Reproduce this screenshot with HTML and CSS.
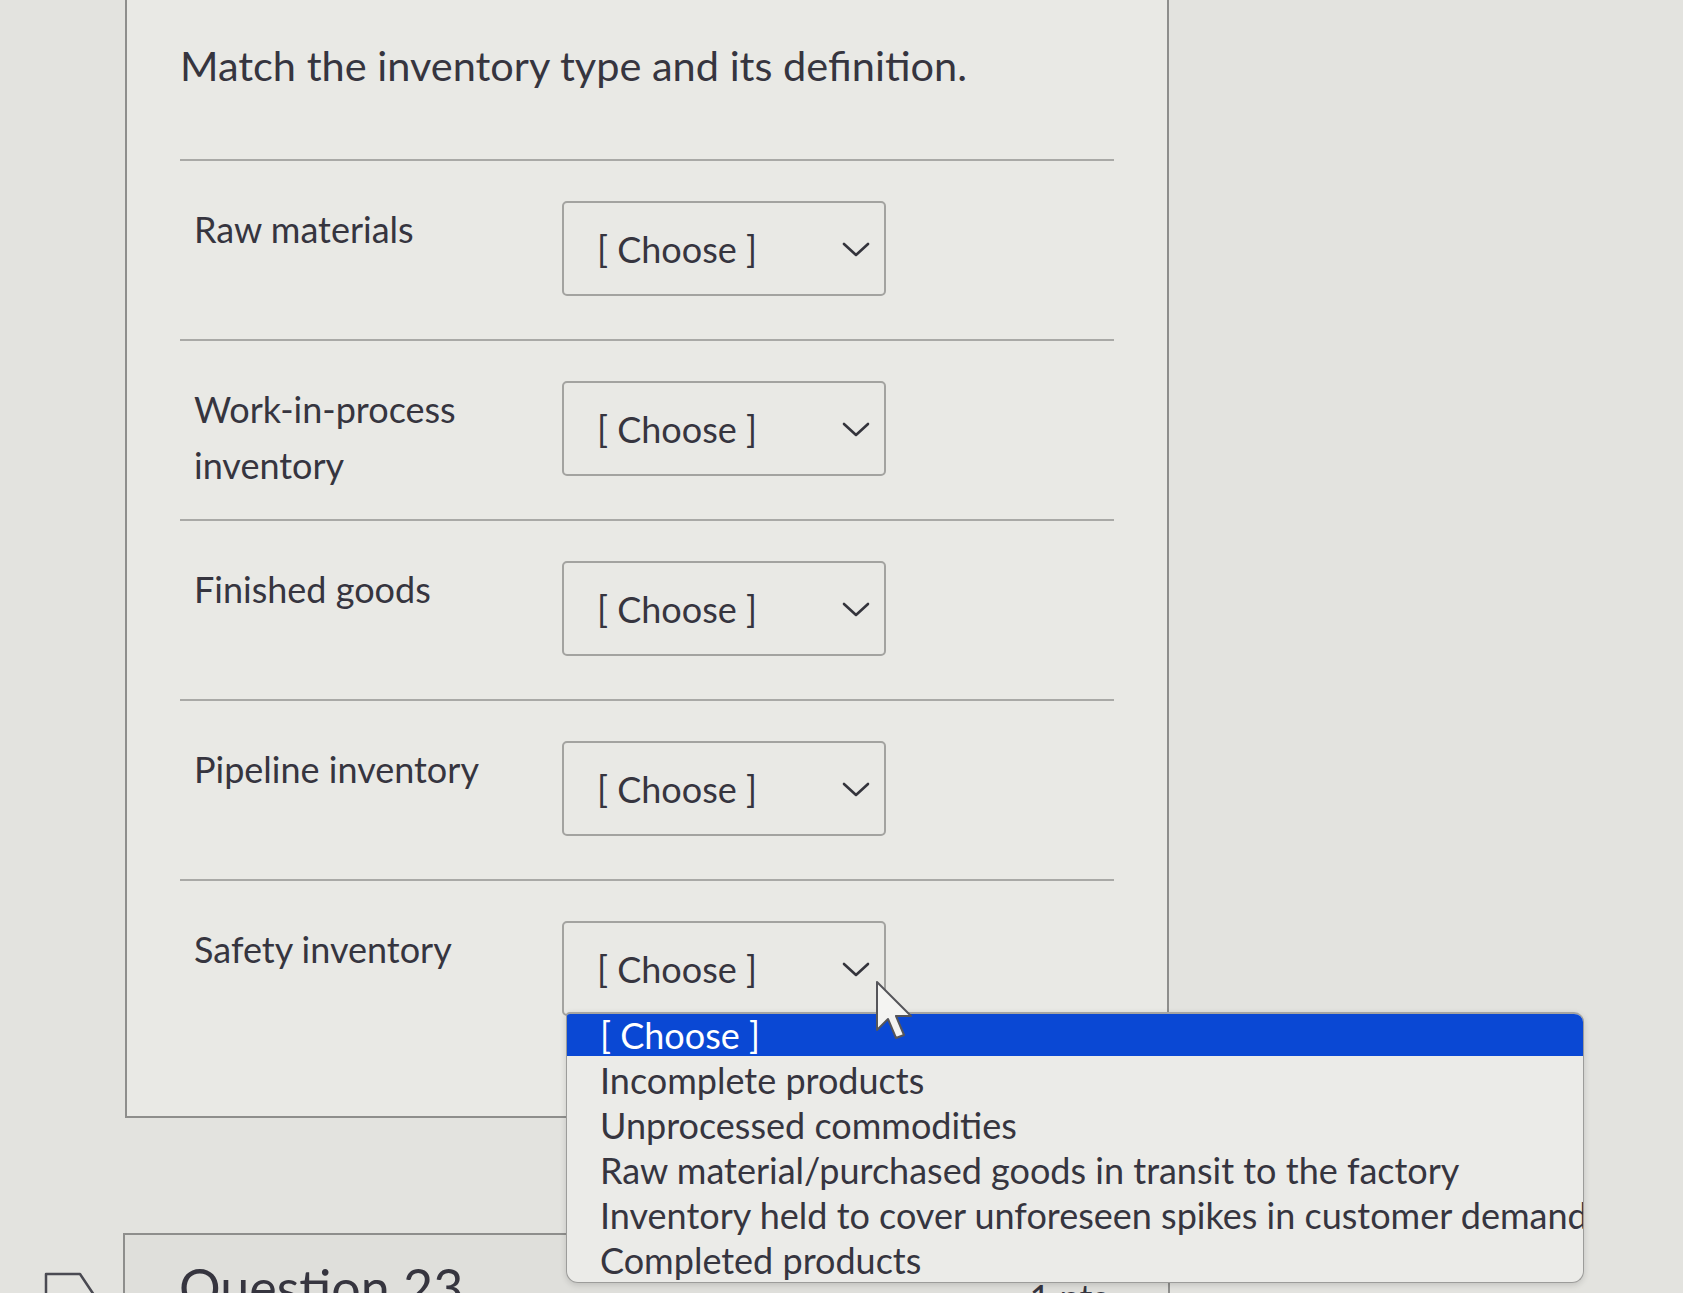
FILE: index.html
```html
<!DOCTYPE html>
<html>
<head>
    <title>Quiz - Question 22</title>
    <link rel="stylesheet" href="styles.css">
</head>
<body>
    <div class="quiz-card">
        <h2 class="prompt">Match the inventory type and its definition.</h2>

        <div class="match-row">
            <div class="term">Raw materials</div>
            <div class="select-wrap">
                <div class="select">
                    <span>[ Choose ]</span>
                    <svg class="chevron" width="28" height="16" viewBox="0 0 28 16"><path d="M2 2 L14 13 L26 2" fill="none" stroke="#34343c" stroke-width="2.6" stroke-linecap="round" stroke-linejoin="round"/></svg>
                </div>
            </div>
        </div>

        <div class="match-row">
            <div class="term">Work-in-process inventory</div>
            <div class="select-wrap">
                <div class="select">
                    <span>[ Choose ]</span>
                    <svg class="chevron" width="28" height="16" viewBox="0 0 28 16"><path d="M2 2 L14 13 L26 2" fill="none" stroke="#34343c" stroke-width="2.6" stroke-linecap="round" stroke-linejoin="round"/></svg>
                </div>
            </div>
        </div>

        <div class="match-row">
            <div class="term">Finished goods</div>
            <div class="select-wrap">
                <div class="select">
                    <span>[ Choose ]</span>
                    <svg class="chevron" width="28" height="16" viewBox="0 0 28 16"><path d="M2 2 L14 13 L26 2" fill="none" stroke="#34343c" stroke-width="2.6" stroke-linecap="round" stroke-linejoin="round"/></svg>
                </div>
            </div>
        </div>

        <div class="match-row">
            <div class="term">Pipeline inventory</div>
            <div class="select-wrap">
                <div class="select">
                    <span>[ Choose ]</span>
                    <svg class="chevron" width="28" height="16" viewBox="0 0 28 16"><path d="M2 2 L14 13 L26 2" fill="none" stroke="#34343c" stroke-width="2.6" stroke-linecap="round" stroke-linejoin="round"/></svg>
                </div>
            </div>
        </div>

        <div class="match-row">
            <div class="term">Safety inventory</div>
            <div class="select-wrap">
                <div class="select">
                    <span>[ Choose ]</span>
                    <svg class="chevron" width="28" height="16" viewBox="0 0 28 16"><path d="M2 2 L14 13 L26 2" fill="none" stroke="#34343c" stroke-width="2.6" stroke-linecap="round" stroke-linejoin="round"/></svg>
                </div>

                <!-- open option list -->
                <ul class="options">
                    <li class="selected">[ Choose ]</li>
                    <li>Incomplete products</li>
                    <li>Unprocessed commodities</li>
                    <li>Raw material/purchased goods in transit to the factory</li>
                    <li>Inventory held to cover unforeseen spikes in customer demand</li>
                    <li>Completed products</li>
                </ul>

                <svg class="cursor" width="40" height="62" viewBox="0 0 40 62">
                    <path d="M2 2 L2 50 L13 39 L21 58 L29 55 L21 36 L36 36 Z" fill="#f4f4f2" stroke="#55555a" stroke-width="2" stroke-linejoin="round"/>
                </svg>
            </div>
        </div>
    </div>

    <div class="question-row">
        <svg class="flag" width="54" height="52" viewBox="0 0 54 52">
            <path d="M2 2 H36 L52 26 L36 50 H2 Z" fill="none" stroke="#4a4a52" stroke-width="2.5" stroke-linejoin="round"/>
        </svg>
        <div class="question-card">
            <div class="question-name">Question 23</div>
            <div class="question-pts">1 pts</div>
        </div>
    </div>
</body>
</html>
```

FILE: styles.css
```css
body {
    margin: 0;
    background-color: #e3e3df;
    font-family: Lato, "Noto Sans", sans-serif;
    color: #36353f;
    overflow: hidden;
}

.quiz-card {
    width: 934px;
    margin-left: 125px;
    padding: 0 53px 57px;
    background-color: #e9e9e5;
    border: 2px solid #8e8e8c;
    border-top: none;
}

.prompt {
    margin: 0 0 69px;
    padding-top: 40px;
    font-size: 41.5px;
    font-weight: 400;
    line-height: 50px;
}

.match-row {
    display: grid;
    grid-template-columns: 368px 324px;
    grid-template-rows: 95px;
    padding: 40px 14px 43px;
    border-top: 2px solid #a9a9a6;
}

.term {
    font-size: 36px;
    line-height: 56px;
    padding-right: 20px;
}

.select-wrap {
    position: relative;
}

.select {
    box-sizing: border-box;
    height: 95px;
    display: flex;
    align-items: center;
    justify-content: space-between;
    padding: 0 14px 0 33px;
    border: 2px solid #a3a3a0;
    border-radius: 5px;
    font-size: 36px;
}

.chevron {
    display: block;
    margin-top: 2px;
}

.options {
    position: absolute;
    z-index: 2;
    top: calc(100% - 4px);
    left: 4px;
    width: 1018px;
    height: 271px;
    box-sizing: border-box;
    margin: 0;
    padding: 0;
    list-style: none;
    overflow: hidden;
    white-space: nowrap;
    background-color: #ebebe8;
    border: 1px solid #9c9c9a;
    border-top: 2px solid #a5a5a3;
    border-radius: 4px 10px 12px 12px;
    box-shadow: 0 2px 6px rgba(0, 0, 0, 0.15);
    font-size: 36px;
}

.options li {
    height: 45px;
    line-height: 45px;
    padding-left: 33px;
}

.options li.selected {
    height: 42px;
    line-height: 42px;
    margin-bottom: 2px;
    background-color: #0a48d4;
    color: #ffffff;
}

.cursor {
    position: absolute;
    z-index: 3;
    left: 313px;
    top: 59px;
}

.question-row {
    display: flex;
    align-items: flex-start;
    margin-top: 115px;
}

.flag {
    display: block;
    margin: 39px 25px 0 44px;
}

.question-card {
    width: 1047px;
    height: 120px;
    display: flex;
    justify-content: space-between;
    align-items: flex-start;
    padding: 0 60px 0 54px;
    box-sizing: border-box;
    background-color: #dfdfdb;
    border: 2px solid #8e8e8c;
    border-bottom: none;
}

.question-name {
    padding-top: 22px;
    font-size: 52px;
    font-weight: 400;
    line-height: 60px;
}

.question-pts {
    padding-top: 40px;
    font-size: 36px;
    line-height: 44px;
}
```
